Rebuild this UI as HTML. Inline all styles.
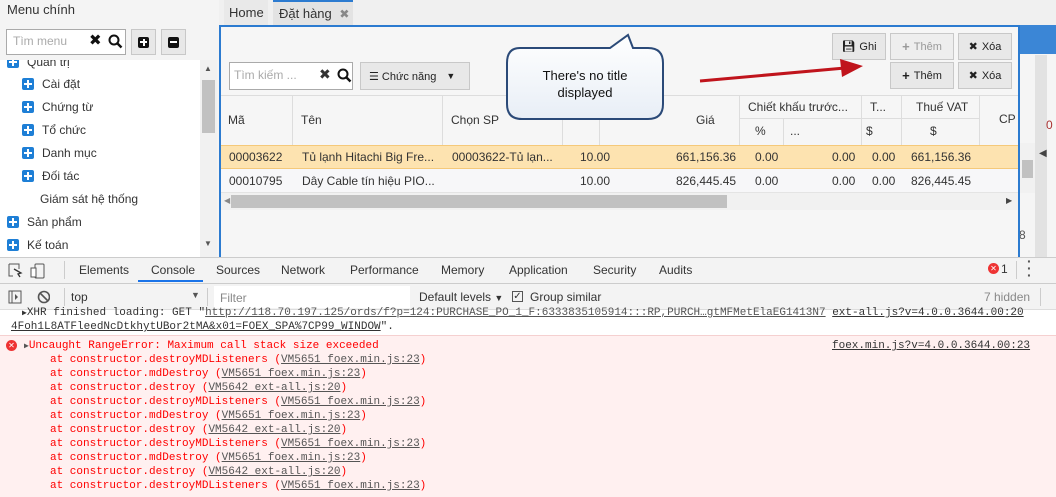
<!DOCTYPE html>
<html><head><meta charset="utf-8">
<style>
*{box-sizing:border-box;margin:0;padding:0}
body{width:1056px;height:497px;overflow:hidden;position:relative;background:#fff;font-family:"Liberation Sans","DejaVu Sans",sans-serif;font-size:12px;color:#333}
.a{position:absolute}
.btn{position:absolute;background:#e8e8e8;border:1px solid #c8c8c8;font-size:11px;color:#222;display:flex;align-items:center;justify-content:center;gap:4px}
.plus{display:inline-block;width:12px;height:12px;background:#1e7fd6;border-radius:2px;position:relative}
.plus:before{content:"";position:absolute;left:2px;top:5px;width:8px;height:2px;background:#fff}
.plus:after{content:"";position:absolute;left:5px;top:2px;width:2px;height:8px;background:#fff}
.tree div{position:absolute;font-size:12px;color:#333;display:flex;align-items:center;gap:8px;height:20px}
.mono{font-family:"Liberation Mono",monospace;font-size:11px}
.ln{position:absolute;white-space:pre;line-height:14px}
.u{text-decoration:underline;color:#555}
.th{position:absolute;font-size:12px;color:#333;border-right:1px solid #ddd}
.cell{position:absolute;font-size:12px;color:#333;white-space:nowrap}
</style></head><body>
<!-- left panel -->
<div class="a" style="left:0;top:0;width:219px;height:257px;background:#f4f4f4"></div>
<div class="a" style="left:7px;top:2px;font-size:13px;color:#333">Menu chính</div>
<div class="a" style="left:6px;top:29px;width:120px;height:26px;background:#fff;border:1px solid #aaa;"></div>
<div class="a" style="left:13px;top:34px;font-size:12px;color:#aaa">Tìm menu</div>
<div class="a" style="left:89px;top:31px;font-size:15px;font-weight:bold;color:#111">✖</div>
<svg class="a" style="left:108px;top:34px" width="15" height="15"><circle cx="6" cy="6" r="4.5" stroke="#111" stroke-width="2" fill="none"/><line x1="9.5" y1="9.5" x2="13.5" y2="13.5" stroke="#111" stroke-width="2.4"/></svg>
<div class="btn" style="left:131px;top:29px;width:25px;height:26px"><span style="width:11px;height:11px;background:#111;border-radius:2px;position:relative;display:block"><span style="position:absolute;left:2px;top:4.5px;width:7px;height:2px;background:#fff"></span><span style="position:absolute;left:4.5px;top:2px;width:2px;height:7px;background:#fff"></span></span></div>
<div class="btn" style="left:161px;top:29px;width:25px;height:26px"><span style="width:11px;height:11px;background:#111;border-radius:2px;position:relative;display:block"><span style="position:absolute;left:2px;top:4.5px;width:7px;height:2px;background:#fff"></span></span></div>
<div class="a" style="left:0;top:60px;width:217px;height:197px;background:#fff;overflow:hidden">
<div class="tree">
<div style="left:7px;top:-8px"><span class="plus"></span>Quản trị</div>
<div style="left:22px;top:14px"><span class="plus"></span>Cài đặt</div>
<div style="left:22px;top:37px"><span class="plus"></span>Chứng từ</div>
<div style="left:22px;top:60px"><span class="plus"></span>Tổ chức</div>
<div style="left:22px;top:83px"><span class="plus"></span>Danh mục</div>
<div style="left:22px;top:106px"><span class="plus"></span>Đối tác</div>
<div style="left:40px;top:129px">Giám sát hệ thống</div>
<div style="left:7px;top:152px"><span class="plus"></span>Sản phẩm</div>
<div style="left:7px;top:175px"><span class="plus"></span>Kế toán</div>
</div>
<div class="a" style="left:200px;top:0;width:17px;height:197px;background:#f1f1f1"></div>
<div class="a" style="left:202px;top:20px;width:13px;height:53px;background:#c1c1c1"></div>
<div class="a" style="left:204px;top:4px;font-size:8px;color:#555">▲</div>
<div class="a" style="left:204px;top:179px;font-size:8px;color:#555">▼</div>
</div>
<!-- tabs -->
<div class="a" style="left:219px;top:0;width:837px;height:25px;background:#f0f0f0"></div>
<div class="a" style="left:224px;top:0;width:44px;height:25px;background:#e9e9e9;font-size:13px;padding:5px 0 0 5px">Home</div>
<div class="a" style="left:273px;top:0;width:80px;height:25px;background:#e3e3e3;border-top:2px solid #2c7bd0;font-size:13px;padding:4px 0 0 6px">Đặt hàng <span style="color:#888;font-size:12px;font-weight:bold;margin-left:4px">✖</span></div>
<!-- right background window -->
<div class="a" style="left:1019px;top:25px;width:37px;height:232px;background:#f5f5f5"></div>
<div class="a" style="left:1019px;top:25px;width:37px;height:29px;background:#3b86d6"></div>
<div class="a" style="left:1035px;top:55px;width:12px;height:202px;background:#e2e2e2"></div>
<div class="a" style="left:1039px;top:148px;font-size:10px;color:#444">◀</div>
<div class="a" style="left:1046px;top:118px;font-size:12px;color:#a33">0</div>
<div class="a" style="left:1019px;top:228px;font-size:12px;color:#555">8</div>
<!-- main window -->
<div class="a" style="left:219px;top:25px;width:801px;height:232px;background:#f6f6f6;border:2px solid #2c7bd0;border-bottom:none;overflow:hidden">
<div class="btn" style="left:611px;top:6px;width:54px;height:27px">💾︎<span>Ghi</span></div>
<div class="btn" style="left:669px;top:6px;width:64px;height:27px;color:#999;background:#eee"><b style="font-size:13px">+</b> Thêm</div>
<div class="btn" style="left:737px;top:6px;width:54px;height:27px"><b>✖</b> Xóa</div>
<div class="btn" style="left:669px;top:35px;width:64px;height:27px"><b style="font-size:13px">+</b> Thêm</div>
<div class="btn" style="left:737px;top:35px;width:54px;height:27px"><b>✖</b> Xóa</div>
<div class="a" style="left:8px;top:35px;width:124px;height:28px;background:#fff;border:1px solid #aaa"></div>
<div class="a" style="left:13px;top:41px;color:#aaa;font-size:12px">Tìm kiếm ...</div>
<div class="a" style="left:98px;top:39px;font-size:14px;font-weight:bold">✖</div>
<svg class="a" style="left:116px;top:41px" width="15" height="15"><circle cx="6" cy="6" r="4.5" stroke="#111" stroke-width="2" fill="none"/><line x1="9.5" y1="9.5" x2="13.5" y2="13.5" stroke="#111" stroke-width="2.4"/></svg>
<div class="btn" style="left:139px;top:35px;width:110px;height:28px;justify-content:flex-start;padding-left:8px">☰ Chức năng <span style="font-size:9px;margin-left:6px">▼</span></div>
<!-- grid header -->
<div class="a" style="left:0;top:68px;width:797px;height:50px;background:#f6f6f6;border-top:1px solid #ddd"></div>
<div class="th" style="left:0;top:68px;width:72px;height:50px;padding:18px 0 0 7px">Mã</div>
<div class="th" style="left:72px;top:68px;width:150px;height:50px;padding:18px 0 0 8px">Tên</div>
<div class="th" style="left:222px;top:68px;width:120px;height:50px;padding:18px 0 0 8px">Chọn SP</div>
<div class="th" style="left:342px;top:68px;width:37px;height:50px"></div>
<div class="th" style="left:379px;top:68px;width:140px;height:50px;padding:18px 0 0 96px">Giá</div>
<div class="th" style="left:519px;top:68px;width:122px;height:24px;padding:5px 0 0 8px;border-bottom:1px solid #ddd">Chiết khấu trước...</div>
<div class="th" style="left:519px;top:92px;width:44px;height:26px;padding:5px 0 0 15px">%</div>
<div class="th" style="left:563px;top:92px;width:78px;height:26px;padding:5px 0 0 6px">...</div>
<div class="th" style="left:641px;top:68px;width:40px;height:24px;padding:5px 0 0 8px;border-bottom:1px solid #ddd">T...</div>
<div class="th" style="left:641px;top:92px;width:40px;height:26px;padding:5px 0 0 4px">$</div>
<div class="th" style="left:681px;top:68px;width:78px;height:24px;padding:5px 0 0 14px;border-bottom:1px solid #ddd">Thuế VAT</div>
<div class="th" style="left:681px;top:92px;width:78px;height:26px;padding:5px 0 0 28px">$</div>
<div class="th" style="left:759px;top:68px;width:40px;height:50px;padding:17px 0 0 19px;border:none">CP</div>
<!-- rows -->
<div class="a" style="left:0;top:118px;width:797px;height:24px;background:#fde3b0;border-top:1px solid #f5c97a;border-bottom:1px solid #f5c97a"></div>
<div class="a" style="left:0;top:142px;width:797px;height:24px;background:#f7f7f9;border-bottom:1px solid #e4e4e4"></div>
<div class="cell" style="left:8px;top:123px">00003622</div><div class="cell" style="left:81px;top:123px">Tủ lạnh Hitachi Big Fre...</div><div class="cell" style="left:231px;top:123px">00003622-Tủ lạn...</div><div class="cell" style="left:359px;top:123px">10.00</div><div class="cell" style="left:455px;top:123px">661,156.36</div><div class="cell" style="left:534px;top:123px">0.00</div><div class="cell" style="left:611px;top:123px">0.00</div><div class="cell" style="left:651px;top:123px">0.00</div><div class="cell" style="left:690px;top:123px">661,156.36</div>
<div class="cell" style="left:8px;top:147px">00010795</div><div class="cell" style="left:81px;top:147px">Dây Cable tín hiệu PIO...</div><div class="cell" style="left:359px;top:147px">10.00</div><div class="cell" style="left:455px;top:147px">826,445.45</div><div class="cell" style="left:534px;top:147px">0.00</div><div class="cell" style="left:611px;top:147px">0.00</div><div class="cell" style="left:651px;top:147px">0.00</div><div class="cell" style="left:690px;top:147px">826,445.45</div>
<div class="a" style="left:0;top:166px;width:797px;height:17px;background:#f1f1f1"></div>
<div class="a" style="left:10px;top:168px;width:496px;height:13px;background:#c1c1c1"></div>
<div class="a" style="left:3px;top:169px;font-size:8px;color:#888">◀</div>
<div class="a" style="left:785px;top:169px;font-size:8px;color:#444">▶</div>
<div class="a" style="left:799px;top:118px;width:0"></div>
</div>
<div class="a" style="left:1020px;top:143px;width:15px;height:50px;background:#f1f1f1"></div>
<div class="a" style="left:1022px;top:160px;width:11px;height:18px;background:#c1c1c1"></div>
<!-- callout -->
<svg class="a" style="left:500px;top:30px" width="180" height="100">
<defs><linearGradient id="g" x1="0" y1="0" x2="0" y2="1"><stop offset="0" stop-color="#fff"/><stop offset="1" stop-color="#e8eef6"/></linearGradient></defs>
<path d="M20 18 L110 18 L128 5 L133 18 L148 18 Q163 18 163 33 L163 74 Q163 89 148 89 L22 89 Q7 89 7 74 L7 33 Q7 18 20 18 Z" fill="url(#g)" stroke="#2b4a78" stroke-width="2"/>
<text x="85" y="50" font-family="Liberation Sans" font-size="13" text-anchor="middle" fill="#111">There's no title</text>
<text x="85" y="67" font-family="Liberation Sans" font-size="13" text-anchor="middle" fill="#111">displayed</text>
</svg>
<svg class="a" style="left:695px;top:55px" width="175" height="35"><line x1="5" y1="26" x2="150" y2="13" stroke="#c0141c" stroke-width="3"/><polygon points="145,4 168,11 147,22" fill="#c0141c"/></svg>
<!-- devtools -->
<div class="a" style="left:0;top:257px;width:1056px;height:27px;background:#f3f3f3;border-top:1px solid #ccc;border-bottom:1px solid #ccc"></div>
<svg class="a" style="left:8px;top:263px" width="40" height="16"><path d="M1 1 H11 V6 M1 1 V13 H5" fill="none" stroke="#555"/><path d="M6 6 L13 10 L10 11 L12 14" fill="none" stroke="#333" stroke-width="1.3"/><rect x="27" y="1" width="9" height="14" rx="1" fill="none" stroke="#555"/><rect x="23" y="5" width="5" height="9" fill="#fff" stroke="#555"/></svg>
<div class="a" style="left:64px;top:261px;width:1px;height:18px;background:#ccc"></div>
<div class="a" style="top:263px;left:79px;font-size:12px;color:#333;word-spacing:0">Elements</div>
<div class="a" style="top:263px;left:151px;font-size:12px;color:#333">Console</div>
<div class="a" style="left:138px;top:280px;width:65px;height:2px;background:#1a73e8"></div>
<div class="a" style="top:263px;left:216px;font-size:12px;color:#333">Sources</div>
<div class="a" style="top:263px;left:281px;font-size:12px;color:#333">Network</div>
<div class="a" style="top:263px;left:350px;font-size:12px;color:#333">Performance</div>
<div class="a" style="top:263px;left:441px;font-size:12px;color:#333">Memory</div>
<div class="a" style="top:263px;left:509px;font-size:12px;color:#333">Application</div>
<div class="a" style="top:263px;left:593px;font-size:12px;color:#333">Security</div>
<div class="a" style="top:263px;left:659px;font-size:12px;color:#333">Audits</div>
<div class="a" style="left:988px;top:263px;width:11px;height:11px;border-radius:50%;background:#e33;color:#fff;font-size:8px;text-align:center;line-height:11px">✕</div>
<div class="a" style="left:1001px;top:262px;font-size:12px">1</div>
<div class="a" style="left:1016px;top:261px;width:1px;height:18px;background:#ccc"></div>
<div class="a" style="left:1027px;top:258px;font-size:14px;font-weight:bold;color:#555;line-height:7px">·<br>·<br>·</div>
<div class="a" style="left:0;top:284px;width:1056px;height:26px;background:#f3f3f3;border-bottom:1px solid #ddd"></div>
<svg class="a" style="left:8px;top:289px" width="42" height="16"><rect x="1" y="2" width="12" height="12" fill="none" stroke="#555"/><line x1="4" y1="2" x2="4" y2="14" stroke="#555"/><path d="M7 5 L10 8 L7 11Z" fill="#555"/><circle cx="36" cy="8" r="5.5" fill="none" stroke="#555" stroke-width="1.6"/><line x1="32" y1="4" x2="40" y2="12" stroke="#555" stroke-width="1.6"/></svg>
<div class="a" style="left:64px;top:288px;width:1px;height:18px;background:#ccc"></div>
<div class="a" style="left:71px;top:290px;font-size:12px">top</div>
<div class="a" style="left:191px;top:290px;font-size:9px;color:#555">▼</div>
<div class="a" style="left:207px;top:288px;width:1px;height:18px;background:#ccc"></div>
<div class="a" style="left:214px;top:286px;width:196px;height:22px;background:#fff"></div>
<div class="a" style="left:220px;top:291px;font-size:12px;color:#888">Filter</div>
<div class="a" style="left:419px;top:290px;font-size:12px">Default levels <span style="font-size:9px">▼</span></div>
<div class="a" style="left:512px;top:291px;width:11px;height:11px;border:1px solid #555;font-size:10px;line-height:9px;text-align:center">✓</div>
<div class="a" style="left:530px;top:290px;font-size:12px">Group similar</div>
<div class="a" style="left:984px;top:290px;font-size:12px;color:#888">7 hidden</div>
<div class="a" style="left:1040px;top:288px;width:1px;height:18px;background:#ccc"></div>
<!-- console -->
<div class="mono">
<div class="ln" style="left:22px;top:306px;color:#333"><span style="font-size:8px">▶</span>XHR finished loading: GET "<span class="u">http://118.70.197.125/ords/f?p=124:PURCHASE_PO_1_F:6333835105914:::RP,PURCH…gtMFMetElaEG1413N7</span> <span class="u" style="color:#333">ext-all.js?v=4.0.0.3644.00:20</span></div>
<div class="ln" style="left:11px;top:320px;color:#333"><span class="u" style="color:#333">4Foh1L8ATFleedNcDtkhytUBor2tMA&amp;x01=FOEX_SPA%7CP99_WINDOW</span>".</div>
<div class="a" style="left:0;top:335px;width:1056px;height:162px;background:#fff0f0;border-top:1px solid #f5d0d0"></div>
<div class="a" style="left:6px;top:340px;width:11px;height:11px;border-radius:50%;background:#e33;color:#fff;font-size:8px;text-align:center;line-height:11px;font-family:'Liberation Sans'">✕</div>
<div class="ln" style="left:24px;top:339px;color:#f00"><span style="font-size:8px;color:#555">▶</span>Uncaught RangeError: Maximum call stack size exceeded</div>
<div class="ln u" style="left:832px;top:339px;color:#333">foex.min.js?v=4.0.0.3644.00:23</div>
<div class="ln" style="left:50px;top:353px;color:#f00">at constructor.destroyMDListeners (<span class="u">VM5651 foex.min.js:23</span>)
at constructor.mdDestroy (<span class="u">VM5651 foex.min.js:23</span>)
at constructor.destroy (<span class="u">VM5642 ext-all.js:20</span>)
at constructor.destroyMDListeners (<span class="u">VM5651 foex.min.js:23</span>)
at constructor.mdDestroy (<span class="u">VM5651 foex.min.js:23</span>)
at constructor.destroy (<span class="u">VM5642 ext-all.js:20</span>)
at constructor.destroyMDListeners (<span class="u">VM5651 foex.min.js:23</span>)
at constructor.mdDestroy (<span class="u">VM5651 foex.min.js:23</span>)
at constructor.destroy (<span class="u">VM5642 ext-all.js:20</span>)
at constructor.destroyMDListeners (<span class="u">VM5651 foex.min.js:23</span>)</div>
</div>
</body></html>
